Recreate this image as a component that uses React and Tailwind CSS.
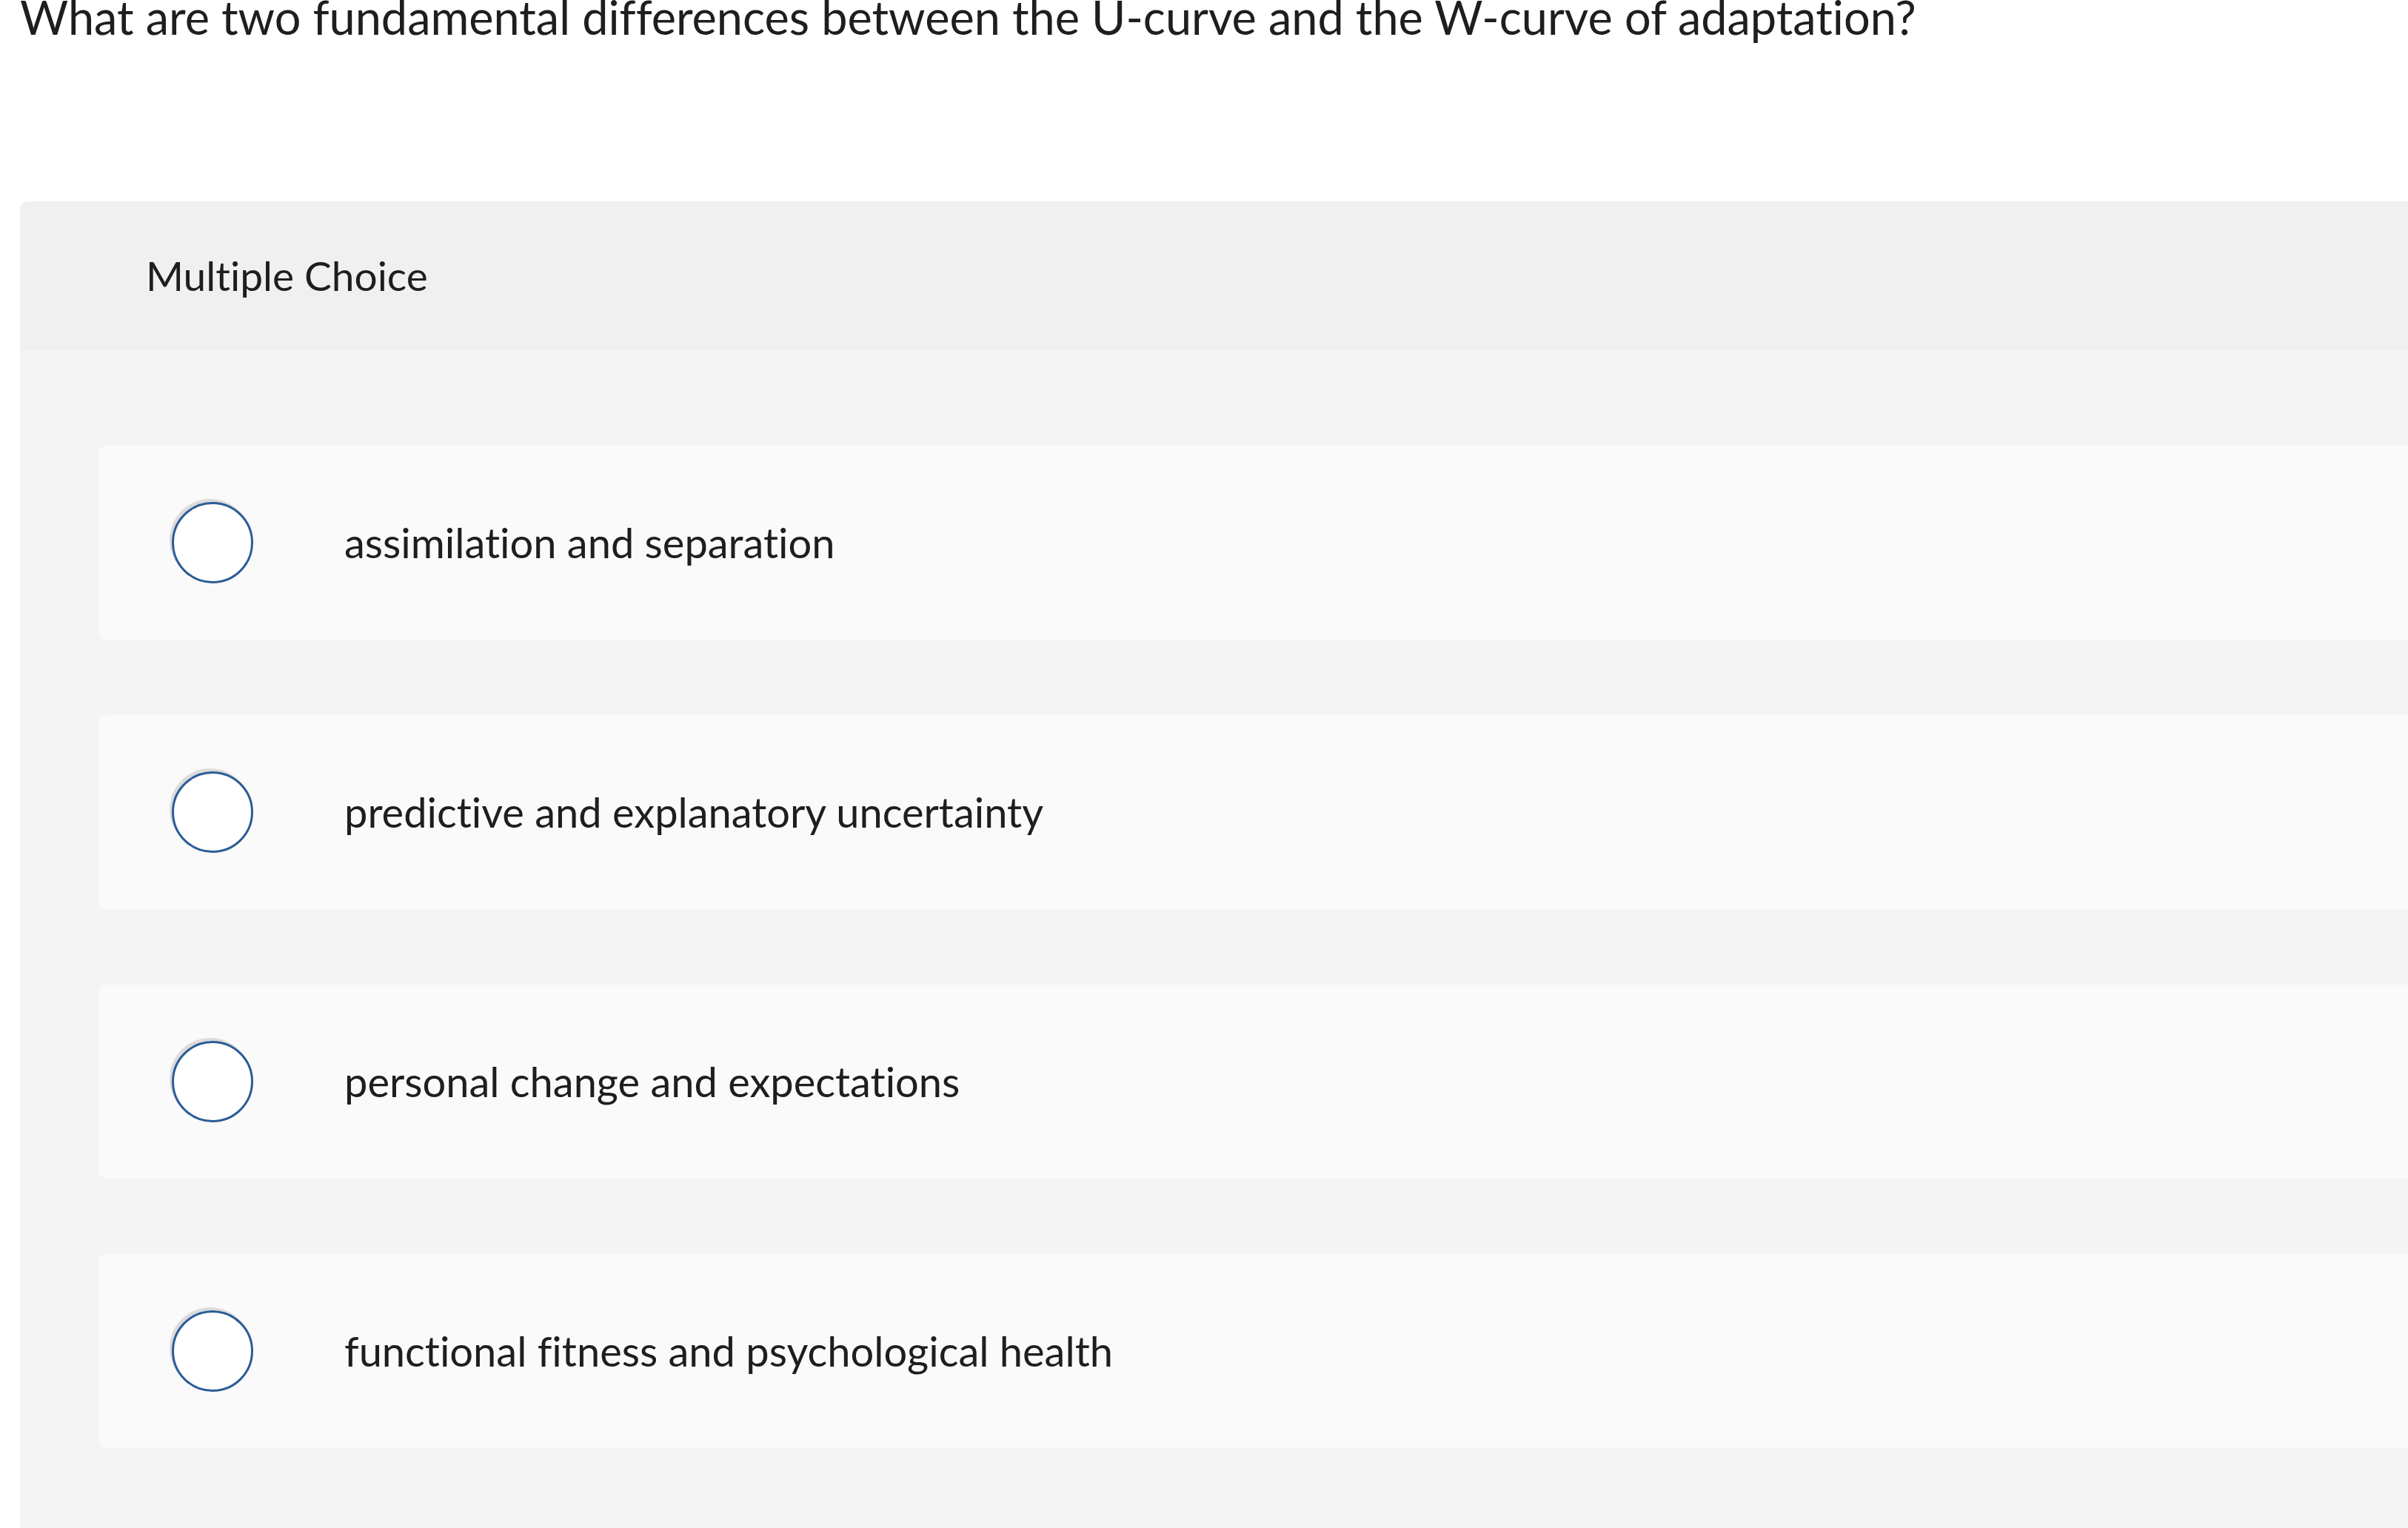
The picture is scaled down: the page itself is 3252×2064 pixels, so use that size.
export default function App() {
  const options = [
    "assimilation and separation",
    "predictive and explanatory uncertainty",
    "personal change and expectations",
    "functional fitness and psychological health",
  ];
  return (
    <div className="w-[3252px] h-[2064px] overflow-hidden bg-white font-['Lato',sans-serif] text-[#1e1e1e] [font-variant-ligatures:none]">
      <p className="pl-[27px] mt-[-9px] text-[63px] leading-[63px] whitespace-nowrap">
        What are two fundamental differences between the U-curve and the W-curve of adaptation?
      </p>
      <div className="ml-[27px] mt-[218px] rounded-tl-[10px] overflow-hidden">
        <div className="h-[201px] bg-[#f0f0f0] pl-[170px] flex items-center text-[55px] text-[#1e1e1e]">
          Multiple Choice
        </div>
        <div className="bg-[#f4f4f4] pt-[129px] pb-[200px] pl-[106px] flex flex-col gap-[102px]">
          {options.map((o) => (
            <div key={o} className="h-[262px] bg-[#fafafa] rounded-l-[10px] flex items-center pl-[99px]">
              <div className="w-[110px] h-[110px] shrink-0 rounded-full border-[3px] border-[#2b5d97] bg-white shadow-[-3px_-4px_1px_rgba(0,0,0,0.12)]" />
              <span className="ml-[123px] text-[56px] text-[#1e1e1e] whitespace-nowrap">{o}</span>
            </div>
          ))}
        </div>
      </div>
    </div>
  );
}
